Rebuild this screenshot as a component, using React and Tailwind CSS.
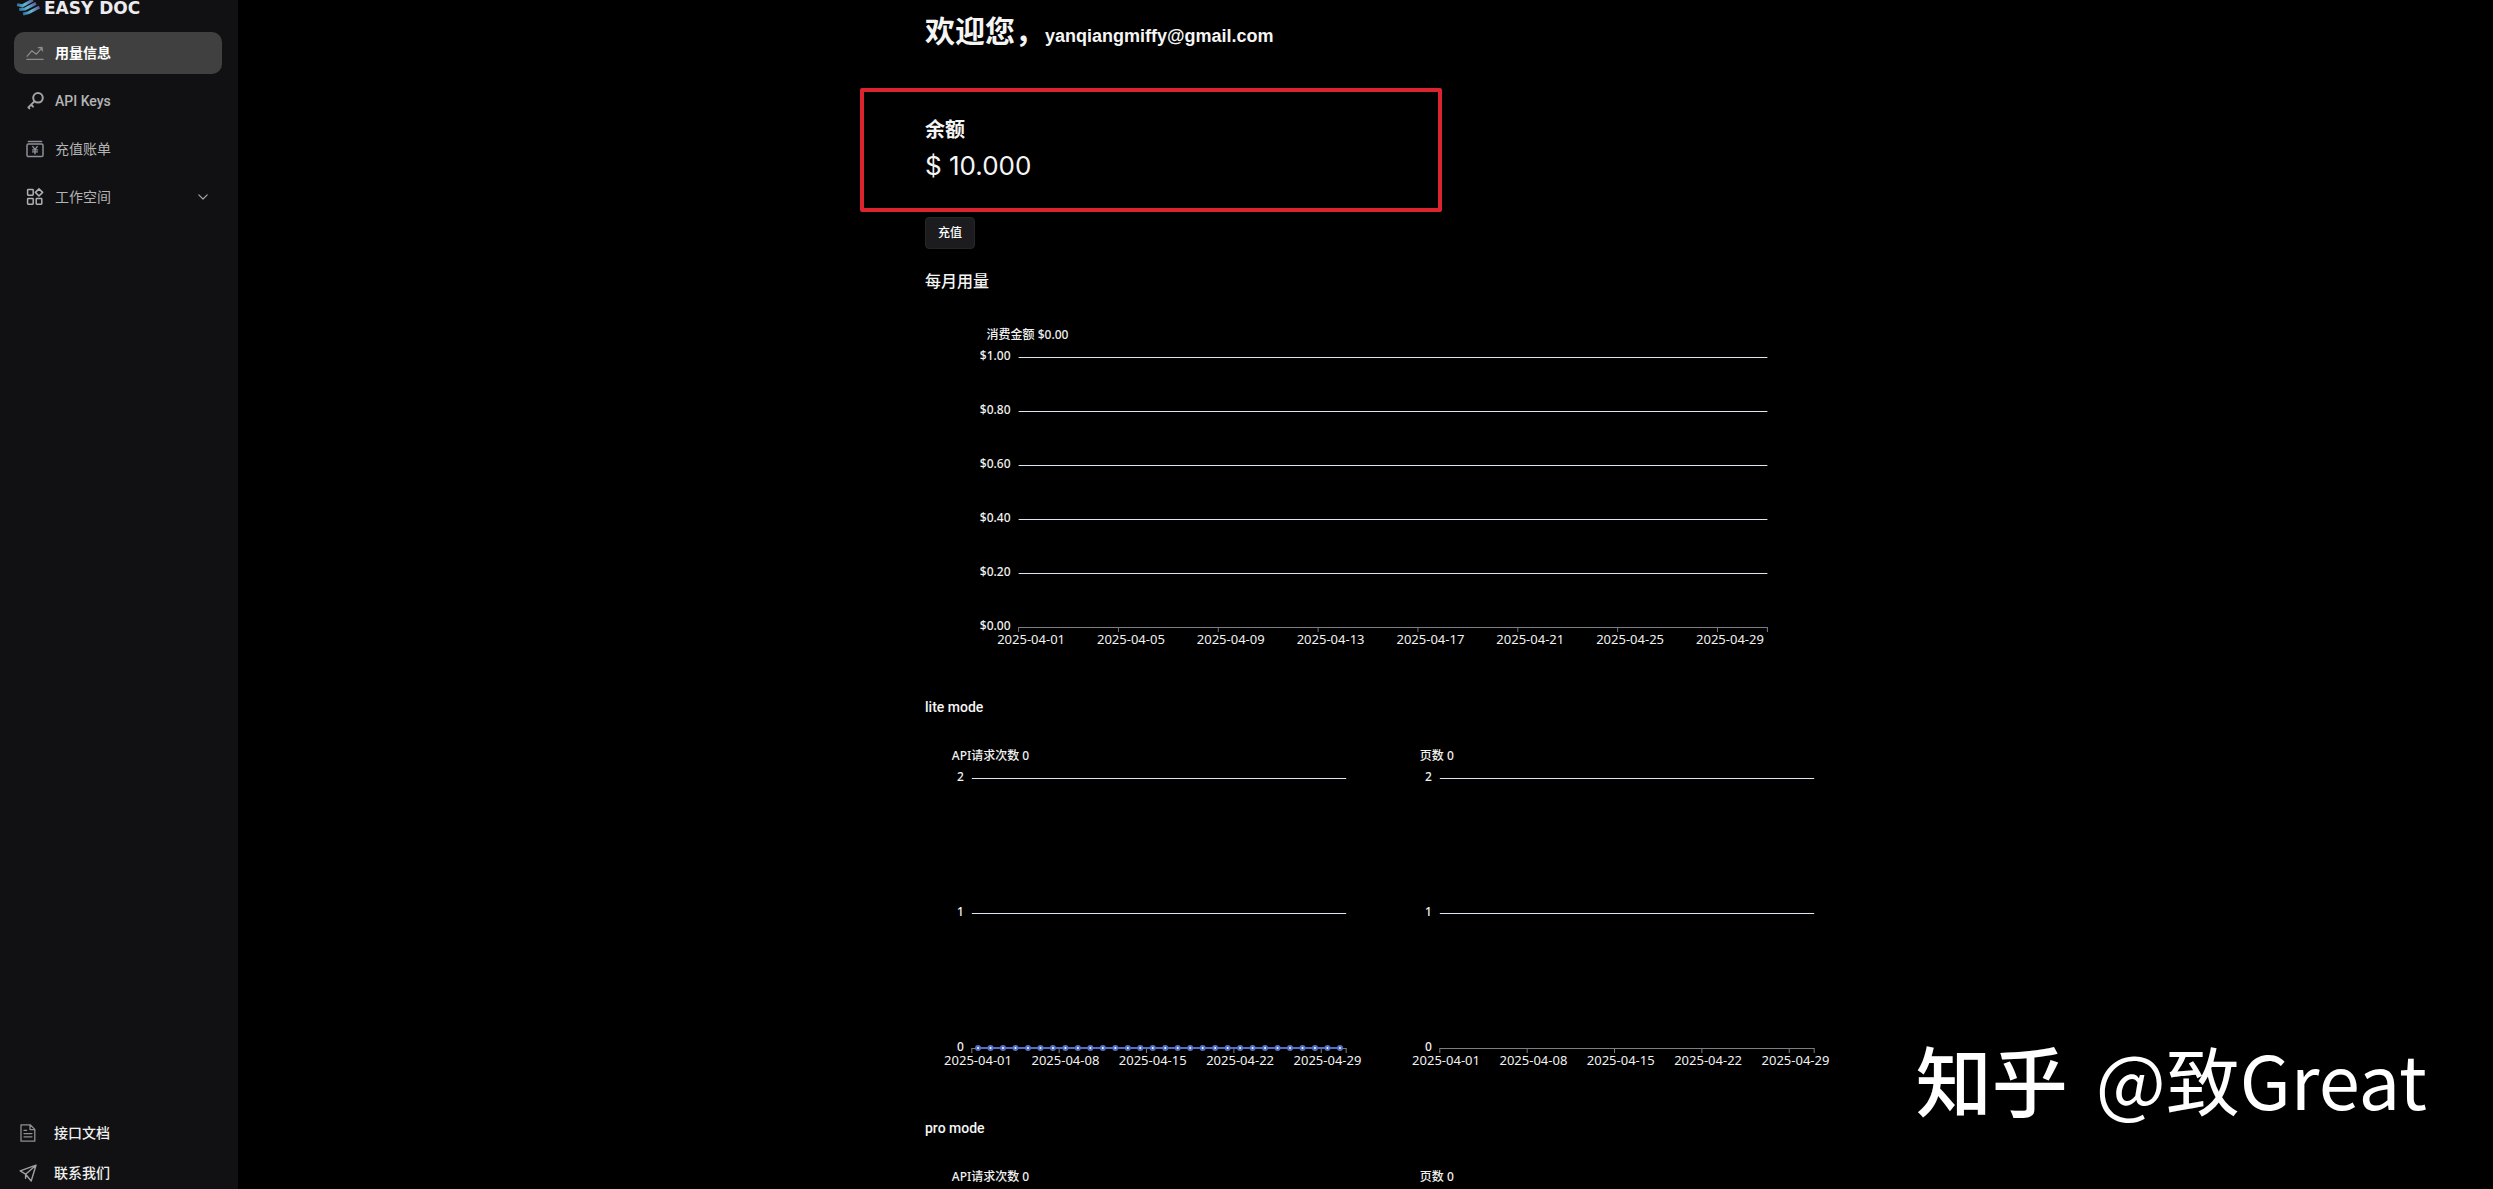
import React from "react";

const icon = { fill: "none", stroke: "currentColor", strokeLinecap: "round", strokeLinejoin: "round" };

function TrendIcon() {
  return (
    <svg viewBox="0 0 18 18" className="size-[18px] shrink-0 text-[#8b8b8b]" {...icon} strokeWidth="1.3">
      <path d="M.8 15.3h16.4M1.2 12.2l4.6-5.4 4.6 3.4 5.4-6.4M12.4 3.6l3.6-.3.4 3.6" />
    </svg>
  );
}

function KeyIcon() {
  return (
    <svg viewBox="0 0 18 18" className="size-[18px] shrink-0 text-[#a3a3a6]" {...icon} strokeWidth="2">
      <circle cx="12" cy="5.8" r="4.8" />
      <path d="M8.4 9.4l-6 6M5.2 12.8l1.8 1.8M2.4 15.4l1 1" />
    </svg>
  );
}

function BillIcon() {
  return (
    <svg viewBox="0 0 18 18" className="size-[18px] shrink-0 text-[#8f8f98]" {...icon} strokeWidth="1.5">
      <path d="M2.4 1.5h13.2" />
      <rect x="1" y="4" width="16" height="12.6" rx="1.4" />
      <path d="M6.8 6.6L9 9.4l2.2-2.8M9 9.4v4.4M6.6 9.9h4.8M6.6 11.9h4.8" strokeWidth="1.4" />
    </svg>
  );
}

function WorkspaceIcon() {
  return (
    <svg viewBox="0 0 18 18" className="size-[18px] shrink-0 text-[#b0b0b3]" {...icon} strokeWidth="1.5">
      <rect x="1.6" y="1.6" width="5.6" height="5.6" rx=".6" />
      <rect x="1.6" y="10.6" width="5.6" height="5.6" rx=".6" />
      <rect x="10.2" y="10.6" width="5.6" height="5.6" rx=".6" />
      <path d="M13 .9l3.6 3.5L13 8 9.4 4.4z" />
    </svg>
  );
}

function ChevronIcon() {
  return (
    <svg viewBox="0 0 10 6" className="mr-[2px] h-[6px] w-[10px] shrink-0 text-[#a3a3a3]" {...icon} strokeWidth="1.2">
      <path d="M.8 .8L5 5 9.2 .8" />
    </svg>
  );
}

function DocIcon() {
  return (
    <svg viewBox="0 0 18 18" className="size-[18px] shrink-0 text-[#8f8f93]" {...icon} strokeWidth="1.3">
      <path d="M2 .8h9.2l4.6 4.6v11.8H2zM11 .8v4.8h4.8M5 6.4h2.6M5 9.6h8M5 12.8h8" />
    </svg>
  );
}

function SendIcon() {
  return (
    <svg viewBox="0 0 18 18" className="size-[18px] shrink-0 text-[#a0a0a4]" {...icon} strokeWidth="1.4">
      <path d="M17 1.2L1.2 6.8l5.4 3.4L12.2 17zM17 1.2L6.6 10.2v4" />
    </svg>
  );
}

function LogoMark() {
  return (
    <svg viewBox="0 0 24 16" className="h-4 w-6 shrink-0" fill="none" strokeWidth="3" aria-hidden="true">
      <defs>
        <linearGradient id="mark" x1="0" y1="0" x2="1" y2="0">
          <stop offset="0" stopColor="#2f6f9a" />
          <stop offset=".5" stopColor="#62b7d6" />
          <stop offset="1" stopColor="#5b5f9c" />
        </linearGradient>
      </defs>
      <path d="M1 4.6l5.2 1.2L17 0" stroke="url(#mark)" />
      <path d="M3.2 9.6l5.6-.6L20 3.4" stroke="url(#mark)" />
      <path d="M7 14l5.6-1.4L23.4 7" stroke="url(#mark)" />
    </svg>
  );
}

const menu = [
  { label: "用量信息", Icon: TrendIcon, active: true },
  { label: "API Keys", Icon: KeyIcon },
  { label: "充值账单", Icon: BillIcon },
  { label: "工作空间", Icon: WorkspaceIcon, expandable: true },
];

const links = [
  { label: "接口文档", Icon: DocIcon },
  { label: "联系我们", Icon: SendIcon },
];

function Sidebar() {
  return (
    <aside className="flex h-full w-[238px] shrink-0 flex-col bg-[#111113] font-['Roboto','Noto_Sans_CJK_SC',sans-serif]">
      <div className="flex h-4 items-center gap-1 pl-4">
        <LogoMark />
        <span className="font-['DejaVu_Sans',sans-serif] text-[17px] leading-4 font-bold text-[#ececf0]">EASY DOC</span>
      </div>
      <nav className="mt-4 flex flex-col gap-[6px] pr-4 pl-[14px]">
        {menu.map(({ label, Icon, active, expandable }) => (
          <a
            key={label}
            href="#"
            className={
              active
                ? "flex h-[42px] items-center gap-[11px] rounded-[10px] bg-[#404040] px-3 text-sm font-bold text-white"
                : "flex h-[42px] items-center gap-[11px] rounded-[10px] px-3 text-sm font-medium text-[#b4b4b4]"
            }
          >
            <Icon />
            <span className={/[a-z]/i.test(label) ? "flex-1" : active ? "flex-1 font-bold" : "flex-1 font-normal"}>{label}</span>
            {expandable && <ChevronIcon />}
          </a>
        ))}
      </nav>
      <div className="mt-auto flex flex-col gap-3 px-[19px] pb-[2px]">
        {links.map(({ label, Icon }) => (
          <a key={label} href="#" className="flex h-7 items-center gap-[17px] text-sm font-medium text-[#f0f0f0]">
            <Icon />
            <span>{label}</span>
          </a>
        ))}
      </div>
    </aside>
  );
}

const DAYS = 30;
const TOP = 60;
const PLOT = 270;

const dayX = (n) => `${10 + (n / DAYS) * 80}%`;
const dateLabel = (n) => `2025-04-${String(n + 1).padStart(2, "0")}`;

function Chart({ title, titleShift, levels, interval, series }) {
  const bottom = TOP + PLOT;
  const marks = [];
  for (let n = 0; n < DAYS; n += interval) marks.push(n);
  const days = Array.from({ length: DAYS }, (_, n) => n);
  return (
    <svg className="block h-[390px] w-full overflow-visible font-['Noto_Sans','Noto_Sans_CJK_SC',sans-serif]" role="img" aria-label={title}>
      <text x="10%" y="42" dx={titleShift} className="fill-[#f2f2f2] text-[12px] font-medium">
        {title}
      </text>
      {levels.map((level, i) => {
        const y = TOP + (PLOT * i) / (levels.length - 1);
        const base = i === levels.length - 1;
        return (
          <g key={level}>
            <rect x="10%" y={y} width="80%" height="1" className={base ? "fill-[#7b7d84]" : "fill-[#e0e6f1]"} />
            <text x="10%" y={y + 3} dx="-8" textAnchor="end" className="fill-[#f2f2f2] text-[12px] font-medium">
              {level}
            </text>
          </g>
        );
      })}
      {[...marks, DAYS].map((n) => (
        <line key={n} x1={dayX(n)} x2={dayX(n)} y1={bottom} y2={bottom + 5} className="stroke-[#7b7d84]" />
      ))}
      {marks.map((n) => (
        <text key={n} x={dayX(n + 0.5)} y={bottom + 17} textAnchor="middle" className="fill-[#f2f2f2] text-[13px]">
          {dateLabel(n)}
        </text>
      ))}
      {series && (
        <g>
          <line x1={dayX(0.5)} x2={dayX(DAYS - 0.5)} y1={bottom} y2={bottom} className="stroke-[#5470c6] stroke-2" />
          {days.map((n) => (
            <circle key={n} cx={dayX(n + 0.5)} cy={bottom} r="2" className="fill-white stroke-[#5470c6] stroke-2" />
          ))}
        </g>
      )}
    </svg>
  );
}

function ModeUsage({ name, series }) {
  return (
    <section className="mt-[10px]">
      <h3 className="font-['Roboto',sans-serif] text-sm leading-[21px] font-medium">{name}</h3>
      <div className="grid grid-cols-2">
        <Chart title="API请求次数 0" titleShift="-20" levels={["2", "1", "0"]} interval={7} series={series} />
        <Chart title="页数 0" titleShift="-20" levels={["2", "1", "0"]} interval={7} />
      </div>
    </section>
  );
}

export default function App() {
  return (
    <div className="relative flex h-screen overflow-hidden bg-black font-['Liberation_Sans','Noto_Sans_CJK_SC',sans-serif] text-[#f5f5f5]">
      <Sidebar />
      <main className="min-w-0 flex-1 pl-[55px]">
        <div className="mx-auto max-w-[936px] pt-3">
          <h1 className="flex items-baseline text-[30px] leading-10 font-bold">
            <span>欢迎您，</span>
            <span className="text-lg">yanqiangmiffy@gmail.com</span>
          </h1>
          <section className="relative mt-16">
            <h2 className="text-xl leading-7 font-bold">余额</h2>
            <p className="mt-1 font-['Inter',sans-serif] text-[26px] leading-9">$ 10.000</p>
            <div className="pointer-events-none absolute -inset-y-7 -left-[65px] w-[582px] rounded-[2px] border-4 border-[#dc2430]" />
          </section>
          <button type="button" className="mt-[33px] block h-8 rounded border border-[#262628] bg-[#1c1c1e] px-3 text-xs font-medium text-white">
            充值
          </button>
          <h2 className="mt-[21px] mb-[3px] text-base leading-6 font-medium">每月用量</h2>
          <Chart
            title="消费金额 $0.00"
            titleShift="-32"
            levels={["$1.00", "$0.80", "$0.60", "$0.40", "$0.20", "$0.00"]}
            interval={4}
          />
          <ModeUsage name="lite mode" series />
          <ModeUsage name="pro mode" series />
        </div>
      </main>
      <div className="pointer-events-none absolute right-[66px] bottom-[59px] flex items-center gap-7 font-['Noto_Sans_CJK_SC',sans-serif] text-[74px] leading-[104px] text-white">
        <span className="text-[76px] font-medium">知乎</span>
        <span>@致Great</span>
      </div>
    </div>
  );
}
